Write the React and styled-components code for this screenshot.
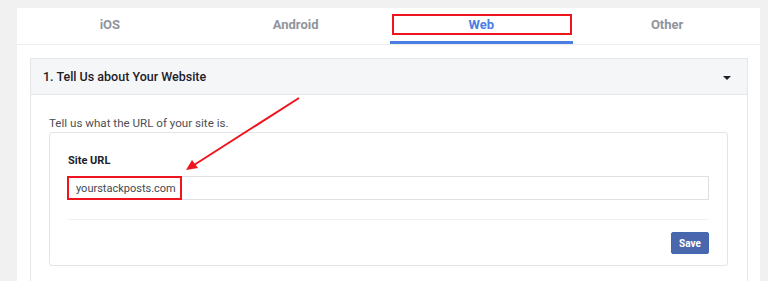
import React from "react";
import styled, { createGlobalStyle } from "styled-components";

const GlobalStyle = createGlobalStyle`
  html, body {
    margin: 0;
    background: #f1f1f1;
    font-family: Roboto, "Liberation Sans", Arial, sans-serif;
  }
`;

const tabs = ["iOS", "Android", "Web", "Other"];

const App = () => {
  return (
    <>
      <GlobalStyle />
      <Page>
        <Card>
          <TabBar>
            {tabs.map((t) => (
              <Tab key={t} active={t === "Web"}>
                {t}
                {t === "Web" && <TabHighlight />}
              </Tab>
            ))}
          </TabBar>
          <Content>
            <Panel>
              <PanelHeader>
                <PanelTitle>1. Tell Us about Your Website</PanelTitle>
                <Caret />
              </PanelHeader>
              <PanelBody>
                <Intro>Tell us what the URL of your site is.</Intro>
                <FormBox>
                  <Label>Site URL</Label>
                  <InputWrap>
                    <UrlInput defaultValue="yourstackposts.com" readOnly />
                    <InputHighlight />
                  </InputWrap>
                  <Divider />
                  <Actions>
                    <SaveButton>Save</SaveButton>
                  </Actions>
                </FormBox>
              </PanelBody>
            </Panel>
          </Content>
        </Card>
        <Arrow width="768" height="281" viewBox="0 0 768 281">
          <line x1="299" y1="98" x2="194" y2="165" stroke="#f0141e" strokeWidth="2" />
          <polygon points="186,170 192,160 198,168" fill="#f0141e" />
        </Arrow>
      </Page>
    </>
  );
};

const Page = styled.div`
  position: relative;
  padding: 8px 8px 0 17px;
  height: 273px;
  overflow: hidden;
`;

const Card = styled.div`
  background: #fff;
  height: 100%;
`;

const TabBar = styled.div`
  display: grid;
  grid-template-columns: repeat(4, 1fr);
  height: 36px;
  border-bottom: 1px solid #eeeeee;
`;

const Tab = styled.div`
  position: relative;
  display: flex;
  align-items: center;
  justify-content: center;
  padding-bottom: 1px;
  font-size: 13px;
  font-weight: 700;
  color: ${(p) => (p.active ? "#4a7ee3" : "#90949c")};
  border-bottom: 3px solid ${(p) => (p.active ? "#4a7ee3" : "transparent")};
  box-sizing: border-box;
  margin: 0 1px;
`;

const TabHighlight = styled.span`
  position: absolute;
  left: 2px;
  right: 1px;
  top: 6px;
  height: 21px;
  border: 2px solid #f0141e;
  box-sizing: border-box;
`;

const Content = styled.div`
  padding: 13px 12px 0 13px;
`;

const Panel = styled.div`
  border: 1px solid #e5e6e9;
  border-bottom: none;
  background: #fff;
`;

const PanelHeader = styled.div`
  display: flex;
  align-items: center;
  justify-content: space-between;
  height: 35px;
  padding: 0 16px 0 12px;
  background: #f5f6f7;
  border-bottom: 1px solid #e5e6e9;
`;

const PanelTitle = styled.div`
  font-size: 12.5px;
  font-weight: 500;
  color: #1d2129;
`;

const Caret = styled.span`
  width: 0;
  height: 0;
  border-left: 4px solid transparent;
  border-right: 4px solid transparent;
  border-top: 4px solid #1d2129;
  margin-top: 2px;
`;

const PanelBody = styled.div`
  padding: 20px 19px 20px 18px;
`;

const Intro = styled.div`
  font-size: 11.6px;
  color: #4b4f56;
  line-height: 16px;
  margin-bottom: 1px;
`;

const FormBox = styled.div`
  border: 1px solid #e3e4e7;
  border-radius: 3px;
  padding: 20px 18px 11px 18px;
`;

const Label = styled.div`
  font-size: 11px;
  font-weight: 700;
  color: #1d2129;
  line-height: 16px;
  margin-bottom: 7px;
`;

const InputWrap = styled.div`
  position: relative;
`;

const UrlInput = styled.input`
  display: block;
  width: 100%;
  box-sizing: border-box;
  height: 24px;
  border: 1px solid #dddfe2;
  padding: 0 7px;
  font-family: Roboto, "Liberation Sans", Arial, sans-serif;
  font-size: 11px;
  color: #444950;
  outline: none;
`;

const InputHighlight = styled.span`
  position: absolute;
  left: -1px;
  top: 0;
  width: 115px;
  height: 24px;
  border: 2px solid #f0141e;
  box-sizing: border-box;
`;

const Divider = styled.div`
  height: 1px;
  background: #f0f1f3;
  margin-top: 19px;
`;

const Actions = styled.div`
  display: flex;
  justify-content: flex-end;
  padding-top: 12px;
`;

const SaveButton = styled.button`
  height: 22px;
  width: 38px;
  padding: 0;
  border: 1px solid #4267b2;
  border-radius: 2px;
  background: #4a66ad;
  color: #fff;
  font-family: Roboto, "Liberation Sans", Arial, sans-serif;
  font-size: 10px;
  font-weight: 700;
`;

const Arrow = styled.svg`
  position: absolute;
  left: 0;
  top: 0;
  pointer-events: none;
`;

export default App;
